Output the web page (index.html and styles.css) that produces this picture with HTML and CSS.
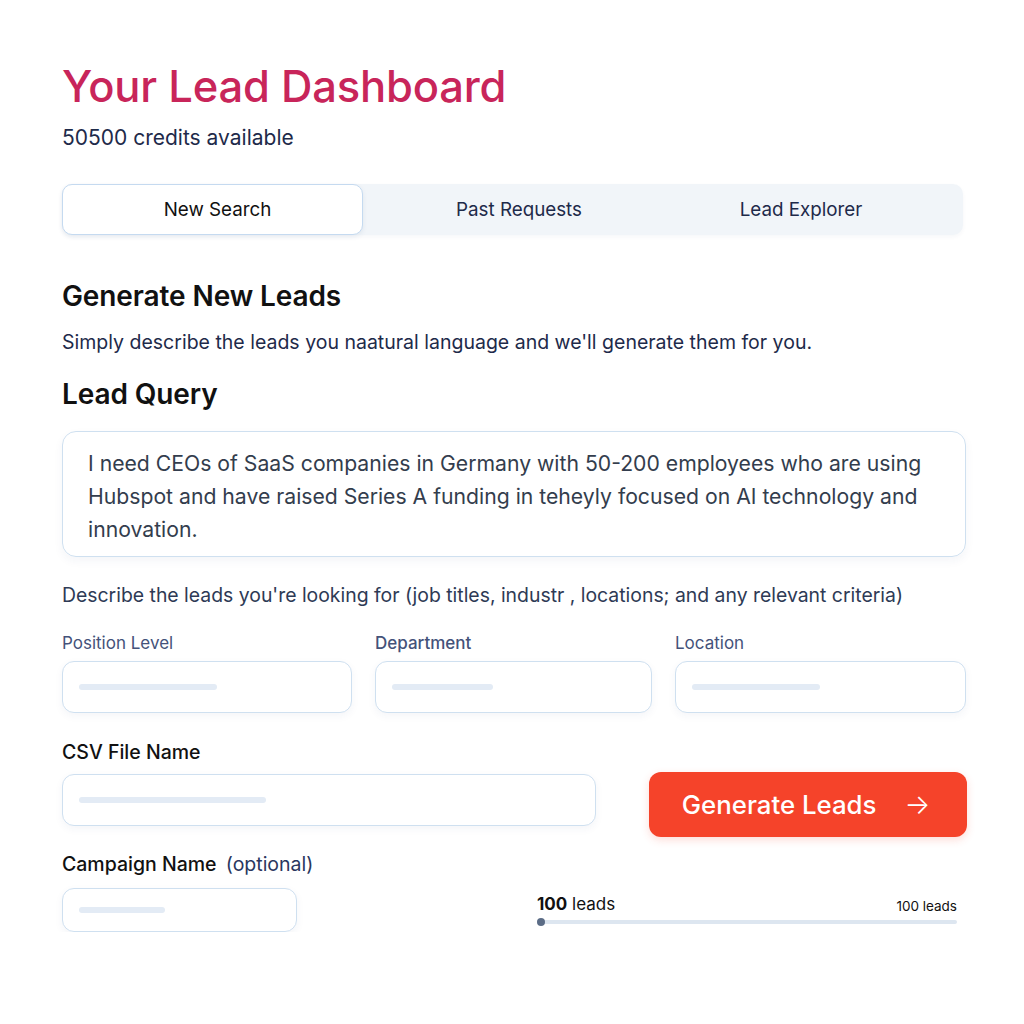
FILE: index.html
```html
<!DOCTYPE html>
<html lang="en">
<head>
<meta charset="utf-8">
<title>Your Lead Dashboard</title>
<link rel="stylesheet" href="styles.css">
</head>
<body>
<main class="page">
  <h1 class="title">Your Lead Dashboard</h1>
  <p class="credits">50500 credits available</p>

  <nav class="tabs">
    <div class="tab active">New Search</div>
    <div class="tab">Past Requests</div>
    <div class="tab">Lead Explorer</div>
  </nav>

  <h2 class="section-title">Generate New Leads</h2>
  <p class="desc">Simply describe the leads you naatural language and we'll generate them for you.</p>

  <h2 class="query-title">Lead Query</h2>
  <div class="textarea">I need CEOs of SaaS companies in Germany with 50-200 employees who are using Hubspot and have raised Series A funding in teheyly focused on AI technology and innovation.</div>
  <p class="helper">Describe the leads you're looking for (job titles, industr , locations; and any relevant criteria)</p>

  <div class="filters">
    <div class="field">
      <label class="small-label">Position Level</label>
      <div class="input"><span class="ph" style="width:138px"></span></div>
    </div>
    <div class="field">
      <label class="small-label strong">Department</label>
      <div class="input"><span class="ph" style="width:101px"></span></div>
    </div>
    <div class="field">
      <label class="small-label">Location</label>
      <div class="input"><span class="ph" style="width:128px"></span></div>
    </div>
  </div>

  <div class="csv-row">
    <div class="csv-field">
      <label class="label">CSV File Name</label>
      <div class="input"><span class="ph" style="width:187px"></span></div>
    </div>
    <button class="generate">Generate Leads <span class="arrow">→</span></button>
  </div>

  <div class="campaign-row">
    <div class="campaign-field">
      <label class="label">Campaign Name <span class="opt">(optional)</span></label>
      <div class="input short"><span class="ph" style="width:86px"></span></div>
    </div>
    <div class="slider">
      <div class="slider-labels">
        <span class="slider-val"><b>100</b> leads</span>
        <span class="slider-max">100 leads</span>
      </div>
      <div class="track"><span class="thumb"></span></div>
    </div>
  </div>
</main>
</body>
</html>
```

FILE: styles.css
```css
* { box-sizing: border-box; }
html, body { margin: 0; background: #ffffff; }
body {
  font-family: Inter, "Noto Sans", "Liberation Sans", sans-serif;
  color: #1e2a4a;
}
.page {
  width: 1024px;
  padding: 58px 58px 0 62px;
}
.title {
  margin: 0;
  font-size: 43.5px;
  font-weight: 500;
  color: #c8255a;
  line-height: 56px;
  letter-spacing: -0.2px;
}
.credits {
  margin: 10px 0 0;
  font-size: 21px;
  line-height: 28px;
  color: #1e2a4a;
}
.tabs {
  margin-top: 32px;
  width: 901px;
  height: 51px;
  background: #f1f5f9;
  border-radius: 10px;
  display: grid;
  grid-template-columns: 301px 300px 300px;
  box-shadow: 0 2px 4px rgba(30, 60, 110, 0.04);
}
.tab {
  display: flex;
  align-items: center;
  justify-content: center;
  font-size: 18.8px;
  color: #1e2a4a;
}
.tab.active {
  background: #ffffff;
  border: 1px solid #c5daf0;
  border-radius: 10px;
  color: #111111;
  padding-left: 10px;
  box-shadow: 0 2px 5px rgba(30, 60, 110, 0.08);
}
.tab:nth-child(2) { padding-left: 12px; }
.tab:nth-child(3) { padding-right: 24px; }
.section-title {
  margin: 44px 0 0;
  font-size: 28px;
  font-weight: 600;
  color: #111111;
  line-height: 34px;
  letter-spacing: -0.1px;
}
.desc {
  margin: 16px 0 0;
  font-size: 19.5px;
  line-height: 26px;
  color: #1e2a4a;
}
.query-title {
  margin: 22px 0 0;
  font-size: 28px;
  font-weight: 600;
  color: #111111;
  line-height: 34px;
  letter-spacing: -0.1px;
}
.textarea {
  margin-top: 20px;
  width: 904px;
  height: 126px;
  border: 1px solid #cfe0f0;
  border-radius: 14px;
  padding: 15px 30px 0 25px;
  font-size: 21.2px;
  line-height: 33px;
  color: #333d4d;
  box-shadow: 0 4px 10px rgba(30, 60, 110, 0.05);
}
.helper {
  margin: 25px 0 0;
  font-size: 19.4px;
  line-height: 26px;
  color: #2e3a55;
}
.filters {
  margin-top: 24px;
  width: 904px;
  display: grid;
  grid-template-columns: 290px 277px 291px;
  column-gap: 23px;
}
.field { display: flex; flex-direction: column; }
.small-label {
  font-size: 17px;
  line-height: 22px;
  color: #44527a;
  margin-bottom: 7px;
}
.small-label.strong { font-weight: 500; }
.input {
  height: 52px;
  border: 1px solid #cfe0f0;
  border-radius: 12px;
  background: #ffffff;
  display: flex;
  align-items: center;
  padding-left: 16px;
  box-shadow: 0 3px 8px rgba(30, 60, 110, 0.05);
}
.ph {
  display: block;
  height: 6px;
  border-radius: 3px;
  background: #e3ebf5;
}
.csv-row {
  margin-top: 27px;
  width: 905px;
  display: flex;
  align-items: flex-end;
  justify-content: space-between;
}
.csv-field { width: 534px; display: flex; flex-direction: column; }
.label {
  font-size: 19.5px;
  font-weight: 500;
  color: #111111;
  line-height: 24px;
  margin-bottom: 10px;
}
.opt { font-weight: 400; color: #2a3760; margin-left: 4px; }
.generate {
  width: 318px;
  height: 65px;
  margin-bottom: -11px;
  border: none;
  border-radius: 12px;
  background: #f5432a;
  color: #ffffff;
  font-family: inherit;
  font-size: 25.8px;
  font-weight: 500;
  display: flex;
  align-items: center;
  justify-content: center;
  gap: 28px;
  padding-right: 10px;
  box-shadow: 0 3px 8px rgba(245, 67, 42, 0.18);
}
.arrow { font-size: 27px; font-weight: 300; }
.campaign-row {
  margin-top: 26px;
  width: 895px;
  display: flex;
  justify-content: space-between;
  align-items: flex-end;
}
.campaign-field { width: 235px; display: flex; flex-direction: column; }
.campaign-field .label { margin-bottom: 12px; white-space: nowrap; }
.input.short { height: 44px; }
.slider { width: 420px; margin-bottom: 8px; }
.slider-labels {
  display: flex;
  justify-content: space-between;
  align-items: flex-end;
  color: #111111;
}
.slider-val { font-size: 17px; line-height: 20px; }
.slider-val b { font-weight: 700; }
.slider-max { font-size: 13.5px; line-height: 16px; }
.track {
  margin-top: 6px;
  height: 4px;
  border-radius: 2px;
  background: #dde6f0;
  position: relative;
}
.thumb {
  position: absolute;
  left: 0;
  top: -2px;
  width: 8px;
  height: 8px;
  border-radius: 50%;
  background: #5b6c86;
}
```
